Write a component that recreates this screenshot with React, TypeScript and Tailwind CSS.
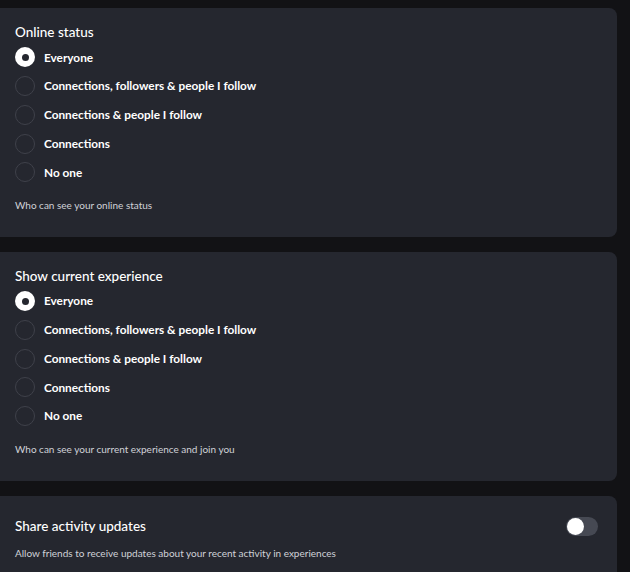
import React, { useState } from "react";

const options = [
  "Everyone",
  "Connections, followers & people I follow",
  "Connections & people I follow",
  "Connections",
  "No one",
];

function RadioGroup({ title, hint }: { title: string; hint: string }) {
  const [value, setValue] = useState(0);
  return (
    <div className="w-[617px] shrink-0 rounded-r-lg bg-[#25272f] pl-[15px] pt-[13px] pb-[25px]">
      <div className="text-[13.5px] leading-[22px] font-medium text-white">{title}</div>
      <div className="flex flex-col">
        {options.map((o, i) => (
          <button
            key={o}
            onClick={() => setValue(i)}
            className="flex h-[28.75px] items-center gap-[9px] text-left"
          >
            {value === i ? (
              <span className="flex h-5 w-5 items-center justify-center rounded-full bg-white">
                <span className="h-[7px] w-[7px] rounded-full bg-[#25272f]" />
              </span>
            ) : (
              <span className="h-5 w-5 rounded-full border border-[#3f414a]" />
            )}
            <span className="text-[11.8px] font-bold text-white">{o}</span>
          </button>
        ))}
      </div>
      <div className="mt-[11px] text-[10px] leading-[14px] text-[#d0d2d8]">{hint}</div>
    </div>
  );
}

export default function App() {
  const [share, setShare] = useState(false);
  return (
    <div
      className="flex h-[572px] flex-col gap-[15px] overflow-hidden bg-[#121215] pt-2"
      style={{ fontFamily: "Lato, 'Noto Sans', sans-serif" }}
    >
      <RadioGroup title="Online status" hint="Who can see your online status" />
      <RadioGroup
        title="Show current experience"
        hint="Who can see your current experience and join you"
      />
      <div className="w-[617px] shrink-0 rounded-r-lg bg-[#25272f] pl-[15px] pr-[19px] pt-[20px] pb-6">
        <div className="flex h-[22px] items-center justify-between">
          <div className="text-[13.5px] font-medium text-white">Share activity updates</div>
          <button
            onClick={() => setShare(!share)}
            className="flex h-[19px] w-8 items-center rounded-full bg-[#464953] px-[1px]"
          >
            <span className="h-[17px] w-[17px] rounded-full bg-white" />
          </button>
        </div>
        <div className="mt-[8px] text-[10px] leading-[14px] text-[#d0d2d8]">
          Allow friends to receive updates about your recent activity in experiences
        </div>
      </div>
    </div>
  );
}
